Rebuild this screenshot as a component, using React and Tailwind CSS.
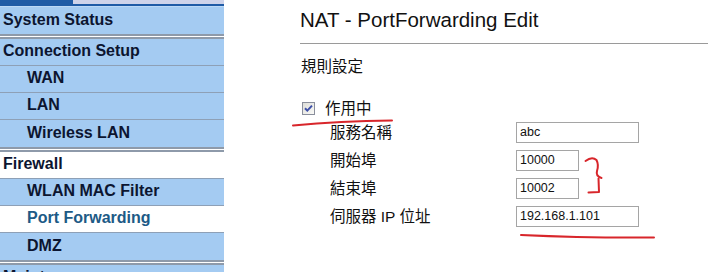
import React from "react";

const blue = "bg-[#a4cbf2]";

function Row({ children, indent, white, border = true, active }) {
  return (
    <div
      className={`shrink-0 h-[27px] pb-[2px] flex items-center ${white ? "bg-white" : blue} ${
        border ? "border-b border-[#8ea0b6]" : "h-[26px]"
      } ${indent ? "pl-[27px]" : "pl-[3px]"}`}
    >
      <span
        className={`text-[16px] font-bold leading-none ${
          active ? "text-[#1d5a86]" : "text-[#0c1530]"
        }`}
      >
        {children}
      </span>
    </div>
  );
}

function Sep() {
  return (
    <div className="shrink-0 h-[5px] border-t-2 border-b-2 border-[#8e9aaa] bg-white" />
  );
}

function Field({ label, value, w }) {
  return (
    <div className="h-[28px] flex items-center">
      <div className="w-[216px] pl-[30px] text-[15.5px] leading-none text-[#111]">
        {label}
      </div>
      <div
        className={`${w} h-[21px] border border-[#a5a5a5] bg-white flex items-center pl-[3px] text-[12.5px] leading-none text-[#111]`}
      >
        {value}
      </div>
    </div>
  );
}

export default function App() {
  return (
    <div
      className="relative w-[708px] h-[272px] overflow-hidden bg-white flex"
      style={{ fontFamily: '"Liberation Sans", "Noto Sans CJK TC", Arial, sans-serif' }}
    >
      {/* Sidebar */}
      <div className="w-[224px] shrink-0 flex flex-col">
        <div className="shrink-0 h-[4px] flex">
          <div className="w-[73px] bg-[#1f5ba6]" />
          <div className="flex-1 bg-[#ced3ea]" />
        </div>
        <div className="shrink-0 h-[2px] bg-[#1f5ba6]" />
        <div className="shrink-0 h-[1px] bg-[#bcd8f6]" />
        <Row border={false}>System Status</Row>
        <Sep />
        <Row>Connection Setup</Row>
        <Row indent>WAN</Row>
        <Row indent>LAN</Row>
        <Row indent border={false}>Wireless LAN</Row>
        <Sep />
        <Row white>Firewall</Row>
        <Row indent>WLAN MAC Filter</Row>
        <Row indent white active>Port Forwarding</Row>
        <Row indent border={false}>DMZ</Row>
        <Sep />
        <Row>Maintenance</Row>
      </div>

      {/* Content */}
      <div className="flex-1 pl-[76px] flex flex-col">
        <div className="mt-[10px] text-[20.5px] leading-none text-[#111]">
          NAT - PortForwarding Edit
        </div>
        <div className="mt-[12px] border-t border-[#9a9a9a]" />
        <div className="mt-[16px] h-[15px] flex items-center text-[15.5px] leading-none text-[#111] pl-[1px]">
          規則設定
        </div>
        <div className="mt-[26px] h-[16px] flex items-center">
          <div className="ml-[2px] w-[13px] h-[13px]">
            <svg width="13" height="13" viewBox="0 0 13 13">
              <defs>
                <linearGradient id="cb" x1="0" y1="0" x2="1" y2="1">
                  <stop offset="0" stopColor="#dcdcd6" />
                  <stop offset="1" stopColor="#fbfbf9" />
                </linearGradient>
              </defs>
              <rect x="0.5" y="0.5" width="12" height="12" fill="url(#cb)" stroke="#8a8f9c" />
              <path d="M3 6.2 L5.3 8.6 L10 3.6" fill="none" stroke="#3d4fa8" strokeWidth="2" />
            </svg>
          </div>
          <span className="ml-[10px] text-[15.5px] leading-none text-[#111]">作用中</span>
        </div>
        <div className="mt-[2px] flex flex-col">
          <Field label="服務名稱" value="abc" w="w-[123px]" />
          <Field label="開始埠" value="10000" w="w-[63px]" />
          <Field label="結束埠" value="10002" w="w-[63px]" />
          <Field label="伺服器 IP 位址" value="192.168.1.101" w="w-[123px]" />
        </div>
      </div>

      {/* Red annotations */}
      <svg
        className="absolute left-0 top-0 pointer-events-none"
        width="708"
        height="272"
        viewBox="0 0 708 272"
      >
        <path
          d="M293 125.5 Q340 121 392 120.5"
          fill="none"
          stroke="#d8262b"
          strokeWidth="2"
          strokeLinecap="round"
        />
        <path
          d="M585.5 161 Q592 156 596.5 160 Q599 165 597 171 Q595.5 176 601.5 178 M598.5 178.5 L599 192 L588.5 192.5"
          fill="none"
          stroke="#d8262b"
          strokeWidth="2"
          strokeLinecap="round"
          strokeLinejoin="round"
        />
        <path
          d="M521 235 Q585 238 654 237.5"
          fill="none"
          stroke="#d8262b"
          strokeWidth="2"
          strokeLinecap="round"
        />
      </svg>
    </div>
  );
}
